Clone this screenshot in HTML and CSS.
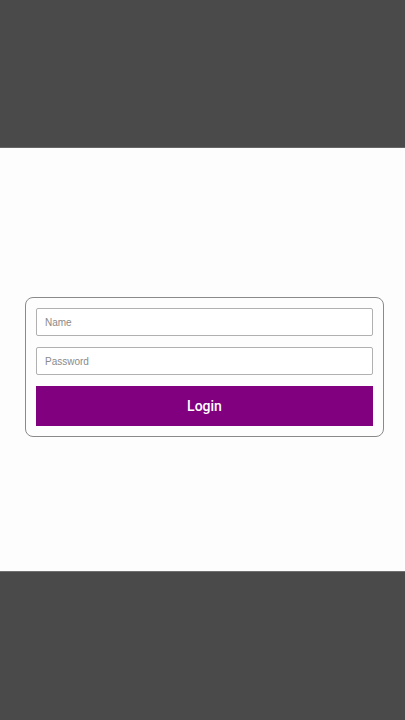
FILE: index.html
```html
<!DOCTYPE html>
<html>
<head>
<meta charset="utf-8">
<link rel="stylesheet" href="styles.css">
</head>
<body>
<div class="band band-top"></div>
<main class="stage">
  <form class="card">
    <input class="field" type="text" placeholder="Name">
    <input class="field" type="password" placeholder="Password">
    <button class="login" type="button">Login</button>
  </form>
</main>
<div class="band band-bottom"></div>
</body>
</html>
```
FILE: styles.css
```css
html, body {
  margin: 0;
  padding: 0;
  background: #fdfdfd;
  font-family: "Liberation Sans", Arial, sans-serif;
}
body {
  width: 405px;
  height: 720px;
  display: flex;
  flex-direction: column;
  overflow: hidden;
}
.band {
  background: #4a4a4a;
  flex: none;
}
.band-top {
  height: 148px;
  border-bottom: 1px solid #666;
  box-sizing: border-box;
}
.band-bottom {
  flex: 1;
  border-top: 1px solid #707070;
}
.stage {
  height: 423px;
  box-sizing: border-box;
  padding: 149px 0 0 25px;
  background: #fdfdfd;
}
.card {
  width: 359px;
  box-sizing: border-box;
  border: 1px solid #8a8a8a;
  border-radius: 8px;
  padding: 10px;
  display: flex;
  flex-direction: column;
  gap: 11px;
  background: #fdfdfd;
  margin: 0;
}
.field {
  height: 28px;
  box-sizing: border-box;
  border: 1px solid #b0b0b0;
  border-radius: 2px;
  padding: 0 8px;
  font-family: "Liberation Sans", Arial, sans-serif;
  font-size: 10px;
  color: #333;
  background: #fff;
  outline: none;
  margin: 0;
}
.field::placeholder {
  color: #8a8a8a;
}
.login {
  height: 40px;
  border: none;
  border-radius: 0;
  background: #800080;
  color: #fff;
  font-family: Roboto, "Liberation Sans", Arial, sans-serif;
  font-weight: 500;
  font-size: 14px;
  margin: 0;
  padding: 0;
}
```
